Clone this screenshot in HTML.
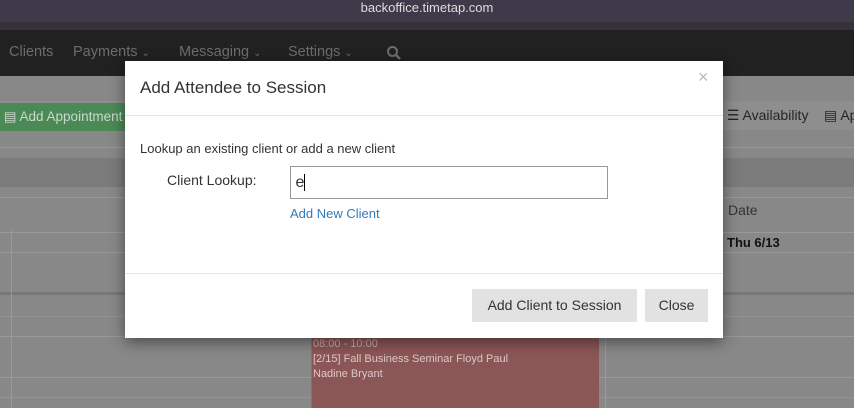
<!DOCTYPE html>
<html><head><style>
body{margin:0;width:854px;height:408px;overflow:hidden;position:relative;background:#888;font-family:"Liberation Sans",sans-serif}
.a{position:absolute;white-space:nowrap}
</style></head><body>
<div class="a" style="left:0;top:0;width:854px;height:22px;background:#3f3a4a"></div>
<div class="a" style="left:0;top:22px;width:854px;height:8px;background:#35313d"></div>
<div class="a" style="left:0;top:30px;width:854px;height:46px;background:#212121"></div>
<div class="a" style="left:0;top:0;width:854px;height:18px;text-align:center;color:#ddd;font-size:13px;line-height:16px">backoffice.timetap.com</div>
<div class="a" style="left:9px;top:44px;color:#6d6d6d;font-size:14.5px">Clients</div>
<div class="a" style="left:73px;top:44px;color:#6d6d6d;font-size:14.5px">Payments <span style="font-size:10px">&#8964;</span></div>
<div class="a" style="left:179px;top:44px;color:#6d6d6d;font-size:14.5px">Messaging <span style="font-size:10px">&#8964;</span></div>
<div class="a" style="left:288px;top:44px;color:#6d6d6d;font-size:14.5px">Settings <span style="font-size:10px">&#8964;</span></div>
<svg class="a" style="left:386px;top:45px" width="16" height="16"><circle cx="6.5" cy="6.5" r="4.5" fill="none" stroke="#6d6d6d" stroke-width="2"/><line x1="10" y1="10" x2="14" y2="14" stroke="#6d6d6d" stroke-width="2.5"/></svg>
<div class="a" style="left:0;top:101px;width:854px;height:29px;background:#8e8e8e"></div>
<div class="a" style="left:0;top:103px;width:125px;height:28px;background:#4b8a56;color:#c9d9cb;font-size:13.5px;line-height:28px;overflow:hidden">&nbsp;▤ Add Appointment</div>
<div class="a" style="left:723px;top:101px;width:131px;height:29px;color:#252525;font-size:14px;line-height:29px;overflow:hidden">&nbsp;☰ Availability&nbsp;&nbsp;&nbsp; ▤ App</div>
<div class="a" style="left:0;top:147px;width:854px;height:1px;background:#9a9a9a"></div>
<div class="a" style="left:0;top:158px;width:854px;height:29px;background:#7b7b7b"></div>
<div class="a" style="left:0;top:197px;width:854px;height:1px;background:#999"></div>
<div class="a" style="left:728px;top:202px;color:#333;font-size:14px">Date</div>
<div class="a" style="left:0;top:232px;width:854px;height:1px;background:#999"></div>
<div class="a" style="left:727px;top:235px;color:#111;font-size:13px;font-weight:bold">Thu 6/13</div>
<div class="a" style="left:0;top:252px;width:854px;height:1px;background:#999"></div>
<div class="a" style="left:0;top:292px;width:854px;height:3px;background:#777"></div>
<div class="a" style="left:0;top:316px;width:854px;height:1px;background:#939393"></div>
<div class="a" style="left:0;top:336px;width:854px;height:1px;background:#999"></div>
<div class="a" style="left:0;top:377px;width:854px;height:1px;background:#999"></div>
<div class="a" style="left:0;top:397px;width:854px;height:1px;background:#939393"></div>
<div class="a" style="left:11px;top:230px;width:1px;height:178px;background:#999"></div>
<div class="a" style="left:598px;top:230px;width:1px;height:178px;background:#999"></div>
<div class="a" style="left:605px;top:230px;width:1px;height:178px;background:#999"></div>
<div class="a" style="left:311px;top:300px;width:287px;height:108px;background:#8b5656;border-left:1px solid #777"></div>
<div class="a" style="left:313px;top:337px;color:#c9b0b0;font-size:11px;line-height:15px">08:00 - 10:00<br><span style="color:#ddc8c8">[2/15] Fall Business Seminar Floyd Paul<br>Nadine Bryant</span></div>
<div class="a" style="left:125px;top:61px;width:598px;height:277px;background:#fff;box-shadow:0 4px 14px rgba(0,0,0,.45)">
 <div class="a" style="left:15px;top:17px;font-size:17px;color:#333">Add Attendee to Session</div>
 <div class="a" style="left:573px;top:6px;font-size:18px;color:#bbb">×</div>
 <div class="a" style="left:0;top:54px;width:598px;height:1px;background:#e5e5e5"></div>
 <div class="a" style="left:15px;top:80px;font-size:13px;color:#333">Lookup an existing client or add a new client</div>
 <div class="a" style="left:42px;top:111px;font-size:14px;color:#333">Client Lookup:</div>
 <div class="a" style="left:165px;top:105px;width:316px;height:31px;border:1px solid #999;font-size:16px;line-height:31px;color:#333">&nbsp;e<span style="border-left:1px solid #000"></span></div>
 <div class="a" style="left:165px;top:145px;font-size:13px;color:#2f7bbf">Add New Client</div>
 <div class="a" style="left:0;top:212px;width:598px;height:1px;background:#e5e5e5"></div>
 <div class="a" style="left:347px;top:228px;width:165px;height:33px;background:#e2e2e2;font-size:14px;line-height:33px;text-align:center;color:#333">Add Client to Session</div>
 <div class="a" style="left:520px;top:228px;width:63px;height:33px;background:#e2e2e2;font-size:14px;line-height:33px;text-align:center;color:#333">Close</div>
</div>
</body></html>
